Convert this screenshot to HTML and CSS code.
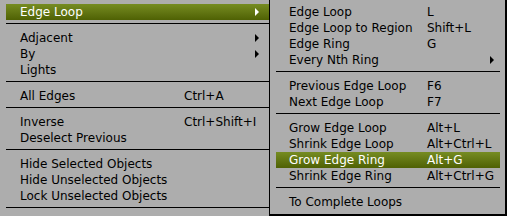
FILE: index.html
```html
<!DOCTYPE html>
<html lang="en">
<head>
    <meta charset="UTF-8">
    <title>Select menu</title>
    <link rel="stylesheet" href="styles.css">
</head>
<body>
    <div class="screen">
        <div class="menu main">
            <div class="item active"><span class="label">Edge Loop</span><span class="key"></span><span class="arrow"></span></div>
            <div class="sep"></div>
            <div class="item"><span class="label">Adjacent</span><span class="key"></span><span class="arrow"></span></div>
            <div class="item"><span class="label">By</span><span class="key"></span><span class="arrow"></span></div>
            <div class="item"><span class="label">Lights</span></div>
            <div class="sep"></div>
            <div class="item"><span class="label">All Edges</span><span class="key">Ctrl+A</span></div>
            <div class="sep"></div>
            <div class="item"><span class="label">Inverse</span><span class="key">Ctrl+Shift+I</span></div>
            <div class="item"><span class="label">Deselect Previous</span></div>
            <div class="sep"></div>
            <div class="item"><span class="label">Hide Selected Objects</span></div>
            <div class="item"><span class="label">Hide Unselected Objects</span></div>
            <div class="item"><span class="label">Lock Unselected Objects</span></div>
            <div class="sep"></div>
        </div>

        <!-- submenu of Edge Loop -->
        <div class="menu sub">
            <div class="item"><span class="label">Edge Loop</span><span class="key">L</span></div>
            <div class="item"><span class="label">Edge Loop to Region</span><span class="key">Shift+L</span></div>
            <div class="item"><span class="label">Edge Ring</span><span class="key">G</span></div>
            <div class="item"><span class="label">Every Nth Ring</span><span class="key"></span><span class="arrow"></span></div>
            <div class="sep"></div>
            <div class="item"><span class="label">Previous Edge Loop</span><span class="key">F6</span></div>
            <div class="item"><span class="label">Next Edge Loop</span><span class="key">F7</span></div>
            <div class="sep"></div>
            <div class="item"><span class="label">Grow Edge Loop</span><span class="key">Alt+L</span></div>
            <div class="item"><span class="label">Shrink Edge Loop</span><span class="key">Alt+Ctrl+L</span></div>
            <div class="item active"><span class="label">Grow Edge Ring</span><span class="key">Alt+G</span></div>
            <div class="item"><span class="label">Shrink Edge Ring</span><span class="key">Alt+Ctrl+G</span></div>
            <div class="sep"></div>
            <div class="item"><span class="label">To Complete Loops</span></div>
        </div>
    </div>
</body>
</html>
```

FILE: styles.css
```css
* {
    box-sizing: border-box;
    margin: 0;
    padding: 0;
}

body {
    background: #adadad;
    font-family: "DejaVu Sans", sans-serif;
    font-size: 12px;
    color: #000;
    overflow: hidden;
}

.screen {
    display: flex;
    align-items: flex-start;
    width: 507px;
    height: 216px;
}

.menu {
    display: flex;
    flex-direction: column;
    flex-shrink: 0;
}

.main {
    width: 269px;
    padding: 4px 0 0 6px;
}

.sub {
    width: 238px;
    height: 216px;
    padding: 4px 5px 0 6px;
    border-left: 1px solid #000;
    border-right: 2px solid #000;
    border-bottom: 2px solid #000;
}

.item {
    display: flex;
    align-items: center;
    height: 16px;
    white-space: nowrap;
}

.main .item { padding-left: 14px; padding-right: 10px; }
.sub .item { padding-left: 13px; padding-right: 6px; }

.main .label { width: 164px; }
.sub .label { width: 138px; }

.key {
    flex: 1;
}

.arrow {
    width: 0;
    height: 0;
    border-left: 4px solid #000;
    border-top: 4px solid transparent;
    border-bottom: 4px solid transparent;
}

.item.active {
    background: linear-gradient(#768c22, #4f6104);
    color: #fff;
}

.item.active .arrow {
    border-left-color: #fff;
}

.sep {
    height: 1px;
    background: #000;
    margin: 3px 0 6px;
}
```
